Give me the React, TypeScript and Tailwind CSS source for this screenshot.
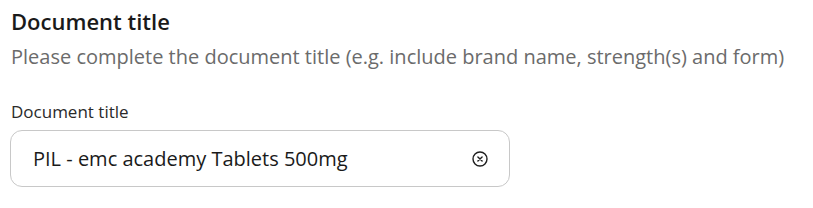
import { useState } from "react";

function ClearIcon() {
  return (
    <svg width="16" height="16" viewBox="0 0 16 16" fill="none" stroke="#1f1f1f" strokeWidth="1.4" strokeLinecap="round">
      <circle cx="8" cy="8" r="7" />
      <path d="M5.9 5.9l4.2 4.2M10.1 5.9l-4.2 4.2" />
    </svg>
  );
}

export default function App() {
  const [title, setTitle] = useState("PIL - emc academy Tablets 500mg");

  return (
    <div className="bg-white px-[11px] pt-[6px] font-['Open_Sans',sans-serif]">
      <h2 className="text-[22px] font-semibold leading-[30px] text-[#1a1a1a]">Document title</h2>
      <p className="mt-[7px] text-[20px] leading-[28px] text-[#6b6b6b]">
        Please complete the document title (e.g. include brand name, strength(s) and form)
      </p>
      <label className="mt-[29px] block text-[17px] leading-[24px] text-[#2a2a2a]">Document title</label>
      <div className="mt-[6px] flex h-[57px] w-[500px] -ml-px items-center justify-between rounded-[12px] border border-[#c8c8c8] pl-[22px] pr-[21px]">
        <input
          value={title}
          onChange={(e) => setTitle(e.target.value)}
          className="w-[420px] bg-transparent text-[20px] text-[#1a1a1a] outline-none"
        />
        <button className="flex h-[16px] w-[16px] shrink-0 items-center justify-center" onClick={() => setTitle("")}>
          <ClearIcon />
        </button>
      </div>
    </div>
  );
}
